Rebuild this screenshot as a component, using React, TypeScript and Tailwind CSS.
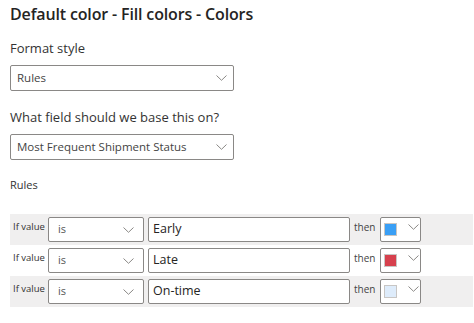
import type React from "react";

// ─── Chevron ────────────────────────────────────────────────────────────────

function Chevron({ className = "" }: { className?: string }) {
  return (
    <svg width="11" height="6" viewBox="0 0 11 6" className={className} fill="none">
      <path d="M0.5 0.5 L5.5 5.3 L10.5 0.5" stroke="#8a8886" strokeWidth="1" />
    </svg>
  );
}

// ─── Select box ─────────────────────────────────────────────────────────────

function Select({ value, className = "" }: { value: string; className?: string }) {
  return (
    <div className={`flex items-center justify-between border border-[#8a8886] rounded-[2px] bg-white ${className}`}>
      <span className="truncate">{value}</span>
      <Chevron />
    </div>
  );
}

// ─── Rule row ───────────────────────────────────────────────────────────────

type Rule = { value: string; color: string; shaded: boolean };

const rules: Rule[] = [
  { value: "Early", color: "bg-[#3a9ff5]", shaded: true },
  { value: "Late", color: "bg-[#d6404d]", shaded: false },
  { value: "On-time", color: "bg-[#deecfb]", shaded: true },
];

function RuleRow({ rule }: { rule: Rule }) {
  return (
    <div className={`flex items-center h-[31px] pl-[3px] ${rule.shaded ? "bg-[#f0efef]" : "bg-white"}`}>
      <span className="text-[9.5px] text-[#333] w-[35px] shrink-0 -mt-[5px]">If value</span>
      <Select value="is" className="w-[96px] h-[25px] pl-[9px] pr-[9px] text-[11px] text-[#555]" />
      <div className="ml-[4px] w-[202px] h-[25px] border border-[#8a8886] rounded-[2px] bg-white flex items-center pl-[4px] text-[12.5px] text-[#252423]">
        {rule.value}
      </div>
      <span className="ml-[4px] w-[26px] text-[10px] text-[#444] -mt-[5px]">then</span>
      <div className="w-[41px] h-[25px] border border-[#8a8886] rounded-[2px] bg-white flex items-start pt-[5px] pl-[3px]">
        <div className={`w-[13px] h-[13px] border border-[#c8c6c4] ${rule.color}`} />
        <Chevron className="ml-[11px] mt-[1px]" />
      </div>
    </div>
  );
}

// ─── App ────────────────────────────────────────────────────────────────────

export default function App() {
  const font: React.CSSProperties = { fontFamily: '"Open Sans", "Noto Sans", sans-serif' };
  return (
    <div className="w-[474px] h-[323px] bg-white overflow-hidden text-[#252423]" style={font}>
      <div className="px-[10px]">
        <h1 className="pt-[3px] text-[16px] font-semibold leading-[22px] tracking-[-0.15px]">
          Default color - Fill colors - Colors
        </h1>
        <div className="mt-[14px] text-[13px] leading-[18px] text-[#333]">Format style</div>
        <Select
          value="Rules"
          className="mt-[8px] w-[224px] h-[26px] pl-[6px] pr-[6px] text-[11.5px] text-[#444]"
        />
        <div className="mt-[17px] text-[13px] leading-[18px] text-[#333]">What field should we base this on?</div>
        <Select
          value="Most Frequent Shipment Status"
          className="mt-[8px] w-[224px] h-[26px] pl-[6px] pr-[6px] text-[11.5px] text-[#444]"
        />
        <div className="mt-[17px] text-[11px] leading-[15px] text-[#333]">Rules</div>
      </div>
      <div className="mt-[22px] ml-[10px] mr-[1px]">
        {rules.map((r) => (
          <RuleRow key={r.value} rule={r} />
        ))}
      </div>
    </div>
  );
}
